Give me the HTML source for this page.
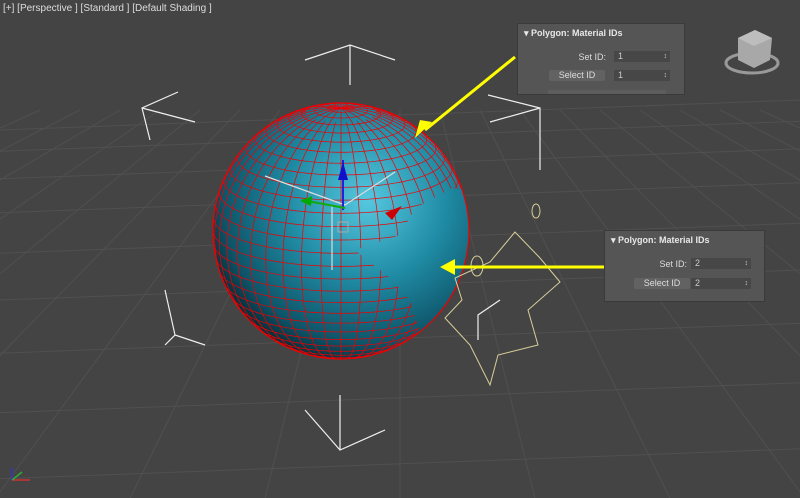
<!DOCTYPE html>
<html><head><meta charset="utf-8"><style>
html,body{margin:0;width:800px;height:498px;overflow:hidden;background:#444;font-family:"Liberation Sans",sans-serif}
#v{position:absolute;left:0;top:0}
.hdr{position:absolute;left:3px;top:3px;color:#ddd;font-size:10px}
.pn{position:absolute;background:#555;border:1px solid #3a3a3a;font-size:9px;color:#ddd}
.pn .t{font-weight:bold;position:absolute;left:6px;top:4px;color:#e8e8e8}
.pn .lb{position:absolute;text-align:right}
.pn .sp{position:absolute;background:#474747;height:11px;color:#ccc;padding-left:4px;box-sizing:border-box;line-height:11px}
.pn .sp:after{content:"\2195";position:absolute;right:3px;font-size:7px}
.pn .bt{position:absolute;background:#626262;height:11px;line-height:11px;text-align:center;border-radius:2px}
</style></head><body>
<svg id="v" width="800" height="498" xmlns="http://www.w3.org/2000/svg">
<defs>
<radialGradient id="sg" cx="0.6" cy="0.38" r="0.7">
<stop offset="0" stop-color="#55c8e0"/><stop offset="0.45" stop-color="#1f8aa3"/><stop offset="0.8" stop-color="#0e5468"/><stop offset="1" stop-color="#03181f"/></radialGradient>
<clipPath id="sc"><circle cx="341" cy="231" r="128"/></clipPath>
<clipPath id="vc"><rect width="800" height="498"/></clipPath>
<mask id="mk"><rect width="800" height="498" fill="#fff"/><polygon points="415,208 452,188 475,190 475,320 445,345 425,348 410,300 390,278 355,250 400,235" fill="#000"/></mask>
</defs>
<g stroke="#505050" stroke-width="1" id="grid" clip-path="url(#vc)"></g>
<circle cx="341" cy="231" r="128" fill="url(#sg)"/>
<g id="wf" clip-path="url(#sc)" mask="url(#mk)" stroke="#e00" stroke-width="0.7" fill="none"></g>
<circle cx="341" cy="231" r="128" fill="none" stroke="#e00" stroke-width="1.2"/>
<g stroke="#eee" stroke-width="1.2" fill="none">
<polyline points="305,60 350,45 395,60"/><line x1="350" y1="45" x2="350" y2="85"/>
<polyline points="178,92 142,108 150,140"/><line x1="142" y1="108" x2="195" y2="122"/>
<polyline points="488,95 540,108 540,170"/><line x1="540" y1="108" x2="490" y2="122"/>
<polyline points="165,290 175,335 165,345"/><line x1="175" y1="335" x2="205" y2="345"/>
<polyline points="305,410 340,450 385,430"/><line x1="340" y1="450" x2="340" y2="395"/>
<polyline points="500,300 478,315 478,340"/>
</g>
<g stroke="#ddd" stroke-width="1.2"><line x1="265" y1="176" x2="345" y2="205"/><line x1="345" y1="205" x2="395" y2="172"/><line x1="332" y1="206" x2="332" y2="270"/></g>
<line x1="343" y1="210" x2="343" y2="160" stroke="#22d" stroke-width="2"/><polygon points="338,180 348,180 343,162" fill="#11c"/>
<line x1="345" y1="208" x2="302" y2="200" stroke="#1a1" stroke-width="2"/><polygon points="300,201 312,196 311,206" fill="#0a0"/>
<polygon points="385,213 402,206 392,220" fill="#c00"/>
<rect x="338" y="222" width="10" height="10" fill="none" stroke="#aaa"/>
<g stroke="#d8cf9a" fill="none" stroke-width="1"><polygon points="515,232 490,262 455,278 462,300 445,318 470,345 490,385 498,355 538,345 528,310 560,282 540,258"/>
<ellipse cx="536" cy="211" rx="4" ry="7"/><ellipse cx="477" cy="266" rx="6" ry="10"/></g>
<g stroke="#ff0" stroke-width="3"><line x1="515" y1="57" x2="425" y2="130"/><line x1="605" y1="267" x2="450" y2="267"/></g>
<polygon points="415,138 432,122 420,120" fill="#ff0"/><polygon points="440,267 455,259 455,275" fill="#ff0"/>
<g><ellipse cx="752" cy="63" rx="26" ry="10" fill="none" stroke="#999" stroke-width="3"/>
<polygon points="738,38 755,30 772,38 770,60 754,68 738,60" fill="#a8a8a8"/><polygon points="738,38 755,30 772,38 754,46" fill="#bdbdbd"/></g>
<g stroke-width="1.5"><line x1="12" y1="480" x2="30" y2="480" stroke="#c33"/><line x1="12" y1="480" x2="12" y2="468" stroke="#33c"/><line x1="12" y1="480" x2="22" y2="472" stroke="#3a3"/></g>
</svg>
<div class="hdr">[+] [Perspective ] [Standard ] [Default Shading ]</div>
<div class="pn" style="left:517px;top:23px;width:166px;height:70px"><div class="t">▾ Polygon: Material IDs</div>
<div class="lb" style="left:30px;width:58px;top:28px">Set ID:</div><div class="sp" style="left:96px;top:27px;width:56px">1</div>
<div class="bt" style="left:31px;top:46px;width:56px">Select ID</div><div class="sp" style="left:96px;top:46px;width:56px">1</div>
<div style="position:absolute;left:30px;top:66px;width:118px;height:4px;background:#5d5d5d"></div></div>
<div class="pn" style="left:604px;top:230px;width:159px;height:70px"><div class="t">▾ Polygon: Material IDs</div>
<div class="lb" style="left:20px;width:62px;top:28px">Set ID:</div><div class="sp" style="left:86px;top:27px;width:60px">2</div>
<div class="bt" style="left:29px;top:47px;width:56px">Select ID</div><div class="sp" style="left:86px;top:47px;width:60px">2</div></div>
<script>
var ns="http://www.w3.org/2000/svg";
function L(g,a,b,c,d){var l=document.createElementNS(ns,"line");l.setAttribute("x1",a);l.setAttribute("y1",b);l.setAttribute("x2",c);l.setAttribute("y2",d);g.appendChild(l);}
var gr=document.getElementById("grid");
for(var i=-10;i<=10;i++){L(gr,400+i*40,110,400+i*40+i*110*388/450,498);}
for(var j=0;j<9;j++){var y=120+j*j*3.2+j*18;L(gr,0,y+10,800,y-20);}
var wf=document.getElementById("wf"),cx=341,cy=231,r=128,t=0.28;
function pj(la,lo){var x=Math.cos(la)*Math.sin(lo),y=Math.sin(la),z=Math.cos(la)*Math.cos(lo);
var yy=y*Math.cos(t)-z*Math.sin(t),zz=y*Math.sin(t)+z*Math.cos(t);return[cx+r*x,cy-r*yy,zz];}
var D=Math.PI/180;
for(var la=-84;la<=84;la+=6){for(var lo=0;lo<360;lo+=4){var a=pj(la*D,lo*D),b=pj(la*D,(lo+4)*D);if(a[2]>0&&b[2]>0)L(wf,a[0],a[1],b[0],b[1]);}}
for(var lo=0;lo<360;lo+=9){for(var la=-90;la<90;la+=4){if(la>72&&(lo%18))continue;var a=pj(la*D,lo*D),b=pj((la+4)*D,lo*D);if(a[2]>0&&b[2]>0)L(wf,a[0],a[1],b[0],b[1]);}}
</script>
</body></html>
